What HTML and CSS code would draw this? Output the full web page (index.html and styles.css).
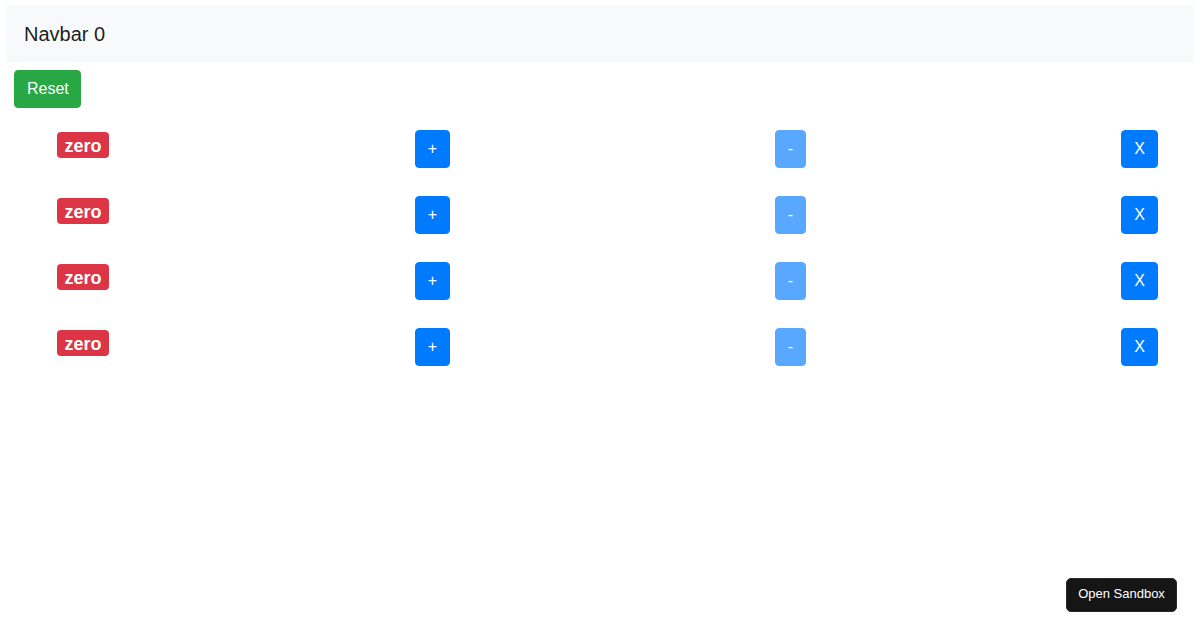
FILE: index.html
```html
<!DOCTYPE html>
<html lang="en">
<head>
<meta charset="utf-8">
<title>Counters</title>
<link rel="stylesheet" href="styles.css">
</head>
<body>
<nav class="navbar"><span class="brand">Navbar 0</span></nav>
<main class="main">
  <button class="btn btn-success">Reset</button>
  <div class="counters">
    <div class="counter">
      <div class="cell c1"><span class="badge">zero</span></div>
      <div class="cell c2"><button class="btn btn-primary">+</button></div>
      <div class="cell c3"><button class="btn btn-primary disabled">-</button></div>
      <div class="cell c4"><button class="btn btn-primary">X</button></div>
    </div>
    <div class="counter">
      <div class="cell c1"><span class="badge">zero</span></div>
      <div class="cell c2"><button class="btn btn-primary">+</button></div>
      <div class="cell c3"><button class="btn btn-primary disabled">-</button></div>
      <div class="cell c4"><button class="btn btn-primary">X</button></div>
    </div>
    <div class="counter">
      <div class="cell c1"><span class="badge">zero</span></div>
      <div class="cell c2"><button class="btn btn-primary">+</button></div>
      <div class="cell c3"><button class="btn btn-primary disabled">-</button></div>
      <div class="cell c4"><button class="btn btn-primary">X</button></div>
    </div>
    <div class="counter">
      <div class="cell c1"><span class="badge">zero</span></div>
      <div class="cell c2"><button class="btn btn-primary">+</button></div>
      <div class="cell c3"><button class="btn btn-primary disabled">-</button></div>
      <div class="cell c4"><button class="btn btn-primary">X</button></div>
    </div>
  </div>
</main>
<button class="sandbox">Open Sandbox</button>
</body>
</html>
```

FILE: styles.css
```css
* { box-sizing: border-box; }
html, body { height: 100%; }
body {
  margin: 0;
  padding: 6px;
  font-family: "Liberation Sans", Arial, sans-serif;
  font-size: 16px;
  line-height: 1.5;
  color: #212529;
  background: #fff;
}
.navbar {
  background: #f8f9fa;
  height: 56px;
  padding: 8px 16px;
  display: flex;
  align-items: center;
}
.brand {
  font-size: 20px;
  line-height: 30px;
  padding: 5px 0;
  color: rgba(0,0,0,.9);
  margin-left: 2px;
}
.main { padding: 8px 8px 0; }
.btn {
  display: inline-block;
  font-family: "Liberation Sans", Arial, sans-serif;
  font-size: 16px;
  line-height: 24px;
  height: 38px;
  padding: 6px 12px;
  border: 1px solid transparent;
  border-radius: 4px;
  color: #fff;
  cursor: pointer;
}
.btn-success { background: #28a745; border-color: #28a745; width: 67px; }
.btn-primary { background: #007bff; border-color: #007bff; }
.btn-primary.disabled { opacity: .65; }
.counters { margin-left: -8px; margin-top: 8px; }
.counter {
  display: grid;
  grid-template-columns: 409px 360px 346px 1fr;
  height: 66px;
}
.cell { padding-top: 14px; }
.c1 { padding-left: 51px; padding-top: 16px; }
.badge {
  display: inline-block;
  background: #dc3545;
  color: #fff;
  font-weight: 700;
  font-size: 18px;
  line-height: 18px;
  padding: 5px 7px 3px;
  border-radius: 4px;
  height: 26px;
  width: 52px;
  text-align: center;
}
.c2 .btn { width: 35px; padding: 6px 0; }
.c3 .btn { width: 31px; padding: 6px 0; }
.c4 .btn { width: 37px; padding: 6px 0; }
.sandbox {
  position: fixed;
  right: 23px;
  bottom: 18px;
  width: 111px;
  height: 34px;
  background: #151515;
  color: #fff;
  border: 1px solid #2a2a2a;
  border-radius: 5px;
  font-family: "Liberation Sans", Arial, sans-serif;
  font-size: 13px;
  line-height: 16px;
  padding: 0 0 3px;
}
```
